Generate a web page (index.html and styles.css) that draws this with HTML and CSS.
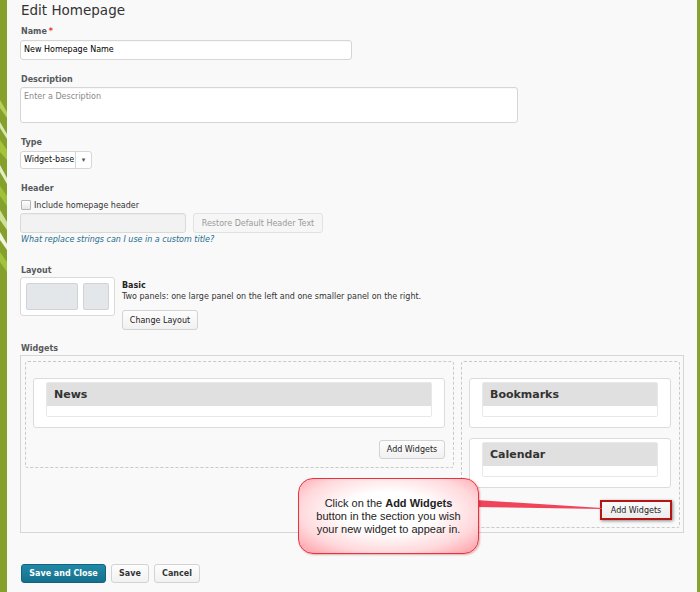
FILE: index.html
```html
<!DOCTYPE html>
<html>
<head>
<meta charset="utf-8">
<link rel="stylesheet" href="styles.css">
</head>
<body>
<div class="page">
  <div class="strip-left">
    <svg width="7" height="592" viewBox="0 0 7 592">
      <rect width="7" height="592" fill="#85a12c"/>
      <polygon points="0,100 7,112 7,118 0,108" fill="#b7cf5a"/>
      <polygon points="0,122 7,134 7,139 0,128" fill="#d9e6b0"/>
      <polygon points="0,140 7,150 7,160 0,152" fill="#a6c43a"/>
      <polygon points="0,165 7,178 7,184 0,172" fill="#e4eec8"/>
      <polygon points="0,186 7,196 7,206 0,196" fill="#9fc13a"/>
      <polygon points="0,210 7,222 7,230 0,220" fill="#cfe09a"/>
      <polygon points="0,232 7,244 7,250 0,240" fill="#f0f5e0"/>
      <polygon points="0,252 7,262 7,272 0,262" fill="#a0c23c"/>
    </svg>
  </div>
  <main class="main">
    <h1 class="title">Edit Homepage</h1>

    <div class="field f-name">
      <label class="label">Name<span class="req">*</span></label>
      <div class="input name-input">New Homepage Name</div>
    </div>

    <div class="field f-desc">
      <label class="label">Description</label>
      <div class="input textarea">Enter a Description</div>
    </div>

    <div class="field f-type">
      <label class="label">Type</label>
      <div class="select"><span class="sel-text">Widget-base</span><span class="sel-arrow">&#9662;</span></div>
    </div>

    <div class="field f-header">
      <label class="label">Header</label>
      <div class="check-row"><span class="checkbox"></span><span>Include homepage header</span></div>
      <div class="header-row">
        <div class="input disabled-input"></div>
        <div class="btn btn-disabled">Restore Default Header Text</div>
      </div>
      <div class="link">What replace strings can I use in a custom title?</div>
    </div>

    <div class="field f-layout">
      <label class="label">Layout</label>
      <div class="layout-row">
        <div class="thumb"><span class="thumb-big"></span><span class="thumb-small"></span></div>
        <div class="layout-info">
          <div class="layout-name">Basic</div>
          <div class="layout-desc">Two panels: one large panel on the left and one smaller panel on the right.</div>
          <div class="btn btn-change">Change Layout</div>
        </div>
      </div>
    </div>

    <div class="field f-widgets">
      <label class="label">Widgets</label>
      <div class="widgets">
        <div class="panel panel-left">
          <div class="card"><div class="wgt"><div class="wgt-head">News</div><div class="wgt-body"></div></div></div>
          <div class="btn-row"><div class="btn btn-add">Add Widgets</div></div>
        </div>
        <div class="panel panel-right">
          <div class="card"><div class="wgt"><div class="wgt-head">Bookmarks</div><div class="wgt-body"></div></div></div>
          <div class="card"><div class="wgt"><div class="wgt-head">Calendar</div><div class="wgt-body"></div></div></div>
          <div class="btn-row"><div class="highlight"><div class="btn btn-add">Add Widgets</div></div></div>
        </div>
      </div>
    </div>

    <div class="actions">
      <div class="btn btn-primary">Save and Close</div>
      <div class="btn btn-bold">Save</div>
      <div class="btn btn-bold">Cancel</div>
    </div>

    <svg class="pointer" width="140" height="20" viewBox="0 0 140 20">
      <polygon points="0,1 0,8 126,10 126,9" fill="#f0445a"/>
    </svg>
    <div class="callout">
      <div>Click on the <b>Add Widgets</b></div>
      <div>button in the section you wish</div>
      <div>your new widget to appear in.</div>
    </div>
  </main>
  <div class="strip-right"></div>
</div>
</body>
</html>
```

FILE: styles.css
```css
* { box-sizing: border-box; }
html, body { margin: 0; padding: 0; }
body {
  width: 700px;
  height: 592px;
  overflow: hidden;
  background: #f9f9f9;
  font-family: "DejaVu Sans", Verdana, sans-serif;
  font-size: 8px;
  color: #333;
}
.page { display: flex; width: 700px; height: 592px; }
.strip-left { width: 7px; flex: none; }
.strip-left svg { display: block; }
.strip-right { width: 3px; flex: none; background: #87a22e; }
.main {
  position: relative;
  flex: 1;
  background: #f9f9f9;
  padding-left: 13px;
}
.title {
  margin: 0;
  padding-top: 0;
  height: 22px;
  font-size: 13.5px;
  line-height: 20px;
  font-weight: normal;
  color: #333;
  padding-left: 1px;
}
.label {
  display: block;
  font-weight: bold;
  font-size: 8px;
  line-height: 12px;
  padding-top: 2px;
  color: #565a5c;
  padding-left: 1px;
}
.req { color: #e33; margin-left: 2px; }
.field { display: block; }
.f-name { margin-top: 2px; }
.f-name .label { margin-bottom: 2px; }
.input {
  background: #fff;
  border: 1px solid #d6d6d6;
  border-radius: 3px;
  box-shadow: inset 0 1px 1px rgba(0,0,0,0.03);
}
.name-input {
  width: 332px;
  height: 20px;
  line-height: 18px;
  padding-left: 3px;
  color: #000;
}
.f-desc { margin-top: 12px; }
.f-desc .label { margin-bottom: 1px; }
.textarea {
  width: 498px;
  height: 36px;
  padding: 4px 3px;
  line-height: 10px;
  color: #888;
}
.f-type { margin-top: 12px; }
.f-type .label { margin-bottom: 2px; }
.select {
  display: flex;
  width: 72px;
  height: 18px;
  background: #fff;
  border: 1px solid #d6d6d6;
  border-radius: 3px;
  line-height: 16px;
  color: #111;
  overflow: hidden;
}
.sel-text { width: 55px; padding-left: 3px; overflow: hidden; white-space: nowrap; border-right: 1px solid #d6d6d6; }
.sel-arrow { flex: 1; text-align: center; font-size: 7px; color: #555; }
.f-header { margin-top: 12px; }
.f-header .label { margin-bottom: 2px; }
.check-row { display: flex; align-items: center; height: 12px; margin-top: 4px; padding-left: 1px; color: #333; }
.checkbox {
  width: 10px; height: 10px;
  border: 1px solid #b5b5b5;
  border-radius: 1px;
  background: linear-gradient(#fff, #e6e6e6);
  margin-right: 3px;
}
.header-row { display: flex; margin-top: 2px; gap: 7px; }
.disabled-input { width: 166px; height: 20px; background: #f2f2f2; border-color: #dadada; }
.btn {
  display: inline-flex;
  align-items: center;
  justify-content: center;
  height: 19px;
  border: 1px solid #d3d3d3;
  border-radius: 3px;
  background: linear-gradient(#fdfdfd, #f1f1f1);
  color: #222;
  font-size: 8px;
  white-space: nowrap;
}
.btn-disabled { width: 130px; height: 20px; color: #9a9a9a; background: #f6f6f6; border-color: #e2e2e2; }
.link { margin-top: 1px; height: 12px; line-height: 12px; font-style: italic; color: #1d6e8e; padding-left: 1px; }
.f-layout { margin-top: 17px; }
.f-layout .label { margin-bottom: 0; }
.layout-row { display: flex; gap: 7px; }
.thumb {
  display: flex;
  gap: 5px;
  width: 95px;
  height: 39px;
  padding: 5px;
  background: #fff;
  border: 1px solid #d9d9d9;
  border-radius: 3px;
}
.thumb-big, .thumb-small {
  display: block;
  height: 27px;
  background: #e3e7ea;
  border: 1px solid #cfd4d8;
  border-radius: 2px;
}
.thumb-big { width: 53px; }
.thumb-small { width: 26px; }
.layout-info { padding-top: 3px; }
.layout-name { font-weight: bold; line-height: 11px; color: #222; }
.layout-desc { line-height: 11px; color: #333; }
.btn-change { width: 76px; margin-top: 8px; height: 20px; }
.f-widgets { margin-top: 11px; }
.f-widgets .label { margin-bottom: 0; }
.widgets {
  display: grid;
  grid-template-columns: 429px 219px;
  gap: 7px;
  align-items: start;
  width: 664px;
  height: 178px;
  padding: 5px 0 0 4px;
  border: 1px solid #d6d6d6;
  background: #f9f9f9;
}
.panel {
  border: 1px dashed #c9c9c9;
  border-radius: 3px;
  padding: 16px 8px 8px 7px;
}
.panel-right { padding-right: 8px; padding-bottom: 7px; }
.card {
  background: #fff;
  border: 1px solid #dcdcdc;
  border-radius: 3px;
  padding: 3px 12px 10px 12px;
}
.panel-right .card + .card { margin-top: 10px; }
.wgt { border: 1px solid #e8e8e8; border-radius: 2px; }
.wgt-head {
  height: 23px;
  background: #e0e0e0;
  font-size: 11px;
  font-weight: bold;
  line-height: 23px;
  padding-left: 7px;
  color: #333;
}
.wgt-body { height: 10px; background: #fff; }
.btn-row { display: flex; justify-content: flex-end; margin-top: 12px; }
.panel-left { padding-bottom: 8px; }
.panel-right .btn-row { margin-top: 12px; margin-right: -1px; }
.btn-add { width: 66px; height: 19px; }
.highlight {
  border: 2px solid #b51515;
  box-shadow: 1px 1px 3px rgba(0,0,0,0.45);
  display: flex;
}
.highlight .btn-add { border: none; border-radius: 0; height: 16px; width: 68px; background: linear-gradient(#fafafa, #ececec); }
.actions { display: flex; gap: 5px; margin-top: 31px; padding-left: 1px; }
.btn-bold { font-weight: bold; color: #333; }
.actions .btn:nth-child(2) { width: 38px; }
.actions .btn:nth-child(3) { width: 46px; }
.btn-primary {
  width: 85px;
  font-weight: bold;
  color: #fff;
  background: linear-gradient(#2189a8, #16708d);
  border-color: #12647e;
}
.callout {
  position: absolute;
  left: 291px;
  top: 478px;
  width: 181px;
  height: 76px;
  border: 1px solid #e8333f;
  border-radius: 15px;
  background: radial-gradient(ellipse at 50% 45%, #ffffff 35%, #ffd9dc 70%, #ff9aa3 100%);
  box-shadow: 1px 1px 2px rgba(150,0,0,0.3);
  padding-top: 18px;
  text-align: center;
  font-family: "Liberation Sans", Arial, sans-serif;
  font-size: 11px;
  line-height: 13px;
  color: #222;
}
.pointer {
  position: absolute;
  left: 469px;
  top: 499px;
}
```
